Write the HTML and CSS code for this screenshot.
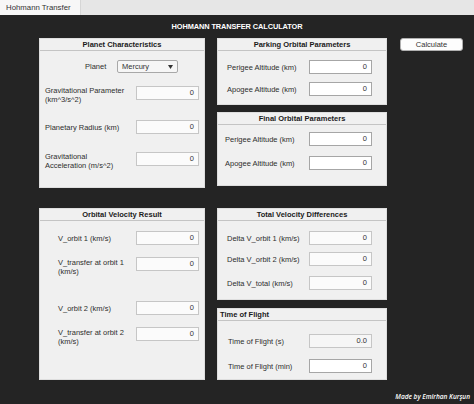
FILE: index.html
```html
<!DOCTYPE html>
<html>
<head>
<meta charset="utf-8">
<title>Hohmann Transfer</title>
<link rel="stylesheet" href="styles.css">
</head>
<body>
<div class="tabbar"><div class="tab">Hohmann Transfer</div></div>
<div class="main">
  <div class="title">HOHMANN TRANSFER CALCULATOR</div>
  <div class="content">
    <div class="col col1">
      <section class="panel p-planet">
        <div class="ptitle">Planet Characteristics</div>
        <div class="pbody body-left">
          <div class="row planet-row mt9">
            <span class="lbl-planet">Planet</span>
            <div class="select"><span>Mercury</span><svg class="arrow" width="5" height="4" viewBox="0 0 5 4"><polygon points="0,0 5,0 2.5,4" fill="#333"/></svg></div>
          </div>
          <div class="row two mt13"><span class="lbl">Gravitational Parameter<br>(km^3/s^2)</span><div class="field ro">0</div></div>
          <div class="row mt16"><span class="lbl">Planetary Radius (km)</span><div class="field ro">0</div></div>
          <div class="row two mt18"><span class="lbl">Gravitational<br>Acceleration (m/s^2)</span><div class="field ro">0</div></div>
        </div>
      </section>
      <section class="panel p-orbital">
        <div class="ptitle">Orbital Velocity Result</div>
        <div class="pbody body-orbital">
          <div class="row mt10"><span class="lbl">V_orbit 1 (km/s)</span><div class="field ro">0</div></div>
          <div class="row two mt12"><span class="lbl lbl-down">V_transfer at orbit 1<br>(km/s)</span><div class="field ro">0</div></div>
          <div class="row mt26"><span class="lbl">V_orbit 2 (km/s)</span><div class="field ro">0</div></div>
          <div class="row two mt12"><span class="lbl lbl-down">V_transfer at orbit 2<br>(km/s)</span><div class="field ro">0</div></div>
        </div>
      </section>
    </div>
    <div class="col col2">
      <section class="panel p-parking">
        <div class="ptitle">Parking Orbital Parameters</div>
        <div class="pbody body-mid">
          <div class="row mt9"><span class="lbl">Perigee Altitude (km)</span><div class="field">0</div></div>
          <div class="row mt8"><span class="lbl">Apogee Altitude (km)</span><div class="field">0</div></div>
        </div>
      </section>
      <section class="panel p-final">
        <div class="ptitle">Final Orbital Parameters</div>
        <div class="pbody body-final">
          <div class="row mt7"><span class="lbl">Perigee Altitude (km)</span><div class="field">0</div></div>
          <div class="row mt10"><span class="lbl">Apogee Altitude (km)</span><div class="field">0</div></div>
        </div>
      </section>
      <section class="panel p-total">
        <div class="ptitle">Total Velocity Differences</div>
        <div class="pbody body-mid">
          <div class="row mt10"><span class="lbl">Delta V_orbit 1 (km/s)</span><div class="field ro">0</div></div>
          <div class="row mt7"><span class="lbl">Delta V_orbit 2 (km/s)</span><div class="field ro">0</div></div>
          <div class="row mt10"><span class="lbl">Delta V_total (km/s)</span><div class="field ro">0</div></div>
        </div>
      </section>
      <section class="panel p-time">
        <div class="ptitle left">Time of Flight</div>
        <div class="pbody body-time">
          <div class="row mt13"><span class="lbl">Time of Flight (s)</span><div class="field dis">0.0</div></div>
          <div class="row mt11"><span class="lbl">Time of Flight (min)</span><div class="field">0</div></div>
        </div>
      </section>
    </div>
    <div class="col col3">
      <button class="btn">Calculate</button>
    </div>
  </div>
  <div class="footer">Made by Emirhan Kurşun</div>
</div>
</body>
</html>
```

FILE: styles.css
```css
html, body {
  margin: 0;
  padding: 0;
}
body {
  width: 474px;
  height: 404px;
  overflow: hidden;
  background: #242424;
  font-family: "Liberation Sans", Arial, sans-serif;
  font-size: 7.5px;
  color: #2e2e2e;
  font-variant-ligatures: none;
}
.tabbar {
  height: 15px;
  background: #e6e6e6;
  display: flex;
}
.tab {
  width: 81px;
  box-sizing: border-box;
  background: #f7f7f7;
  border-right: 1px solid #d6d6d6;
  padding-left: 6px;
  line-height: 15px;
  font-size: 7.8px;
  color: #333;
}
.main {
  height: 389px;
  display: flex;
  flex-direction: column;
}
.title {
  height: 23px;
  line-height: 24px;
  text-align: center;
  color: #fff;
  font-weight: bold;
  font-size: 7.4px;
  letter-spacing: -0.1px;
}
.content {
  display: flex;
  align-items: flex-start;
  padding-left: 39px;
}
.col {
  display: flex;
  flex-direction: column;
}
.col1 { width: 166px; }
.col2 { width: 170px; margin-left: 12px; }
.col3 { margin-left: 13px; }

.panel {
  box-sizing: border-box;
  background: #f0f0f0;
  border: 1px solid #dedede;
  display: flex;
  flex-direction: column;
}
.p-planet { height: 150px; }
.p-orbital { height: 172px; margin-top: 20px; }
.p-parking { height: 67px; }
.p-final { height: 74px; margin-top: 7px; }
.p-total { height: 92px; margin-top: 22px; }
.p-time { height: 72px; margin-top: 8px; }

.ptitle {
  height: 11px;
  line-height: 11px;
  border-bottom: 1px solid #c4c4c4;
  text-align: center;
  font-weight: bold;
  color: #1a1a1a;
}
.ptitle.left {
  text-align: left;
  padding-left: 2px;
}
.pbody {
  display: flex;
  flex-direction: column;
}
.body-left { padding: 0 5px 0 5px; }
.body-orbital { padding: 0 5px 0 18px; }
.body-mid { padding: 0 14px 0 9px; }
.body-final { padding: 0 14px 0 7px; }
.body-time { padding: 0 14px 0 10px; }

.row {
  display: flex;
  align-items: center;
  justify-content: space-between;
  height: 14px;
}
.row.two {
  height: 18px;
  align-items: flex-start;
}
.lbl {
  line-height: 9px;
  color: #2e2e2e;
  white-space: nowrap;
}
.lbl-down { margin-top: 1px; }

.mt7 { margin-top: 7px; }
.mt8 { margin-top: 8px; }
.mt9 { margin-top: 9px; }
.mt10 { margin-top: 10px; }
.mt11 { margin-top: 11px; }
.mt12 { margin-top: 12px; }
.mt13 { margin-top: 13px; }
.mt16 { margin-top: 16px; }
.mt18 { margin-top: 18px; }
.mt26 { margin-top: 26px; }

.field {
  width: 63px;
  height: 14px;
  box-sizing: border-box;
  border: 1px solid #a6a6a6;
  background: #fff;
  text-align: right;
  padding-right: 4px;
  line-height: 12px;
  color: #333;
  flex-shrink: 0;
}
.field.ro {
  background: #fbfbfb;
  border-color: #c6c6c6;
}
.field.dis {
  background: #f6f6f6;
  border-color: #c6c6c6;
}

.planet-row {
  justify-content: flex-start;
  height: 13px;
  padding-left: 40px;
}
.lbl-planet {
  width: 22px;
  margin-right: 10px;
  color: #2e2e2e;
}
.select {
  width: 61px;
  height: 13px;
  box-sizing: border-box;
  border: 1px solid #a8a8a8;
  border-radius: 2px;
  background: #f6f6f6;
  display: flex;
  align-items: center;
  justify-content: space-between;
  padding: 0 4px;
  color: #333;
}
.arrow { display: block; }

.btn {
  width: 63px;
  height: 13px;
  margin: 0;
  padding: 0;
  box-sizing: border-box;
  border: 1px solid #b0b0b0;
  border-radius: 3px;
  background: #fdfdfd;
  font-family: "Liberation Sans", Arial, sans-serif;
  font-size: 7.5px;
  color: #333;
  line-height: 11px;
}

.footer {
  margin-top: auto;
  text-align: right;
  padding: 0 4px 2px 0;
  color: #fff;
  font-family: "Open Sans", "Liberation Sans", sans-serif;
  font-style: italic;
  font-weight: 600;
  font-size: 6.5px;
  line-height: 10px;
}
```
